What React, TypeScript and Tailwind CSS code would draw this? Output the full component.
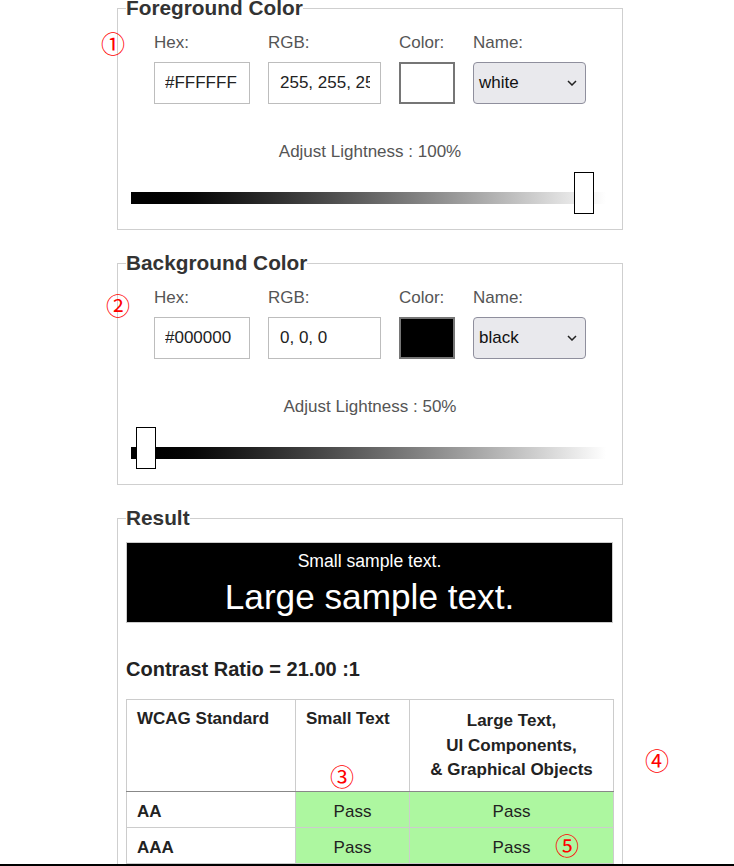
import React from "react"

type Panel = {
  title: string
  hex: string
  rgb: string
  swatch: string
  name: string
  lightness: string
  thumb: string
}

const panels: Panel[] = [
  {
    title: "Foreground Color",
    hex: "#FFFFFF",
    rgb: "255, 255, 255",
    swatch: "bg-white",
    name: "white",
    lightness: "100%",
    thumb: "left-[443px]",
  },
  {
    title: "Background Color",
    hex: "#000000",
    rgb: "0, 0, 0",
    swatch: "bg-black",
    name: "black",
    lightness: "50%",
    thumb: "left-[5px]",
  },
]

function Field({ label, children }: { label: string; children: React.ReactNode }) {
  return (
    <div className="flex flex-col">
      <span className="leading-[20px] text-[#555]">{label}</span>
      <div className="mt-[9px]">{children}</div>
    </div>
  )
}

function ColorPanel({ p, first }: { p: Panel; first?: boolean }) {
  return (
    <fieldset
      className={`border border-[#cfcfcf] px-[8px] pb-[16px] pt-[13px] ${first ? "-mt-[4px]" : "mt-[21px]"}`}
    >
      <legend className="text-[20.8px] font-bold leading-[24px] text-[#333]">{p.title}</legend>
      <div className="flex justify-center gap-[18px]">
        <Field label="Hex:">
          <input
            readOnly
            value={p.hex}
            className="h-[42px] w-[96px] border border-[#bdbdbd] px-[10px] text-[#222] outline-none"
          />
        </Field>
        <Field label="RGB:">
          <input
            readOnly
            value={p.rgb}
            className="h-[42px] w-[113px] border border-[#bdbdbd] pl-[11px] pr-[10px] text-[#222] outline-none"
          />
        </Field>
        <Field label="Color:">
          <div className={`h-[42px] w-[56px] border-2 border-[#767676] ${p.swatch}`} />
        </Field>
        <Field label="Name:">
          <div className="flex h-[42px] w-[113px] items-center justify-between rounded-[4px] border border-[#8f8f9d] bg-[#e9e9ed] pl-[5px] pr-[8px] text-[#111]">
            <span>{p.name}</span>
            <svg width="10" height="6" viewBox="0 0 10 6" fill="none">
              <path d="M1 1l4 4 4-4" stroke="#222" strokeWidth="1.5" />
            </svg>
          </div>
        </Field>
      </div>
      <p className="mt-[38px] text-center leading-[20px] text-[#555]">
        Adjust Lightness : {p.lightness}
      </p>
      <div className="relative ml-[5px] mt-[10px] h-[41px] w-[475px] pt-[20px]">
        <div className="h-[12px] bg-linear-to-r from-black to-white" />
        <div className={`absolute top-0 h-[42px] w-[20px] border border-black bg-white ${p.thumb}`} />
      </div>
    </fieldset>
  )
}

function ResultPanel() {
  return (
    <fieldset className="mt-[21px] border border-[#cfcfcf] px-[8px] pt-[12px]">
      <legend className="text-[20.8px] font-bold leading-[24px] text-[#333]">Result</legend>
      <div className="w-[487px] border border-[#ccc] bg-black pb-[5px] pt-[8px] text-center text-white">
        <p className="text-[17.6px] leading-[20px]">Small sample text.</p>
        <p className="mt-[6px] text-[35.2px] leading-[40px]">Large sample text.</p>
      </div>
      <h3 className="mt-[34px] text-[20px] font-bold leading-[24px] text-[#222]">
        Contrast Ratio = 21.00 :1
      </h3>
      <table className="mt-[18px] w-[487px] table-fixed border-collapse border border-[#ccc] text-[#222]">
        <colgroup>
          <col className="w-[169px]" />
          <col className="w-[114px]" />
          <col className="w-[204px]" />
        </colgroup>
        <thead>
          <tr className="border-b border-[#888]">
            <th className="border border-[#ccc] border-b-[#888] px-[10px] pb-[8px] pt-[9px] text-left align-top leading-[20px]">
              WCAG Standard
            </th>
            <th className="border border-[#ccc] border-b-[#888] px-[10px] pb-[8px] pt-[9px] text-left align-top leading-[20px]">
              Small Text
            </th>
            <th className="border border-[#ccc] border-b-[#888] px-[10px] pb-[8px] pt-[9px] text-center align-top leading-[24.5px]">
              Large Text,
              <br />
              UI Components,
              <br />
              &amp; Graphical Objects
            </th>
          </tr>
        </thead>
        <tbody>
          {["AA", "AAA"].map((lvl) => (
            <tr key={lvl} className="h-[36px]">
              <td className="border border-[#ccc] px-[10px] pt-[5px] font-bold leading-[20px]">{lvl}</td>
              <td className="border border-[#ccc] bg-[#adf7a0] pt-[5px] text-center leading-[20px]">Pass</td>
              <td className="border border-[#ccc] bg-[#adf7a0] pt-[5px] text-center leading-[20px]">Pass</td>
            </tr>
          ))}
        </tbody>
      </table>
      <div className="h-[40px]" />
    </fieldset>
  )
}

const marks = [
  { t: "①", c: "left-[113px] top-[43px]" },
  { t: "②", c: "left-[118px] top-[305px]" },
  { t: "③", c: "left-[342px] top-[776px]" },
  { t: "④", c: "left-[657px] top-[760px]" },
  { t: "⑤", c: "left-[567px] top-[845px]" },
]

export default function App() {
  return (
    <div className="relative h-[866px] w-[734px] overflow-hidden border-b-2 border-black bg-white font-['Liberation_Sans',Arial,sans-serif] text-[17px]">
      <div className="ml-[117px] w-[506px]">
        <ColorPanel p={panels[0]} first />
        <ColorPanel p={panels[1]} />
        <ResultPanel />
      </div>
      {marks.map((m) => (
        <span
          key={m.t}
          className={`absolute -translate-x-1/2 -translate-y-1/2 font-['Noto_Sans_CJK_JP',sans-serif] text-[24px] leading-none text-[#ff0000] ${m.c}`}
        >
          {m.t}
        </span>
      ))}
    </div>
  )
}
